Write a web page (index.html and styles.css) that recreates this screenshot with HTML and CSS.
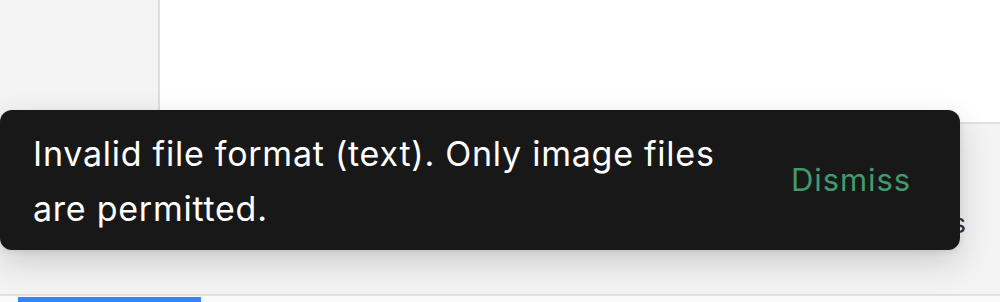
FILE: index.html
```html
<!DOCTYPE html>
<html lang="en">
<head>
<meta charset="utf-8">
<title>Toast</title>
<link rel="stylesheet" href="styles.css">
</head>
<body>
<div class="app">
  <div class="top">
    <aside class="sidebar"></aside>
    <main class="main"></main>
  </div>
  <section class="panel">
    <div class="panel-row"><span class="panel-label">Details</span></div>
  </section>
  <nav class="tabs">
    <div class="tab-indicator"></div>
  </nav>
  <div class="toast" role="alert">
    <p class="toast-message">Invalid file format (text). Only image files are permitted.</p>
    <button class="toast-action" type="button">Dismiss</button>
  </div>
</div>
</body>
</html>
```

FILE: styles.css
```css
* { box-sizing: border-box; }
html, body {
  margin: 0;
  padding: 0;
  width: 1000px;
  height: 302px;
  overflow: hidden;
  font-family: Inter, "Noto Sans", "Liberation Sans", sans-serif;
}
.app {
  position: relative;
  width: 1000px;
  height: 302px;
  display: flex;
  flex-direction: column;
  background: #fafafa;
}
.top {
  display: flex;
  height: 122px;
}
.sidebar {
  width: 160px;
  background: #f3f3f3;
  border-right: 2px solid #dedede;
}
.main {
  flex: 1;
  background: #ffffff;
}
.panel {
  height: 175px;
  background: #f3f3f3;
  border-top: 2px solid #e2e2e2;
  border-bottom: 2px solid #e2e2e2;
  display: flex;
  flex-direction: column;
  justify-content: center;
}
.panel-row {
  display: flex;
  justify-content: flex-end;
  padding-right: 34px;
  padding-top: 30px;
}
.panel-label {
  font-size: 27px;
  line-height: 40px;
  color: #333333;
}
.tabs {
  flex: 1;
  padding-left: 18px;
  padding-top: 1px;
  background: #fafafa;
}
.tab-indicator {
  width: 183px;
  height: 5px;
  background: #3b82f6;
}
.toast {
  position: absolute;
  left: 0;
  top: 110px;
  width: 960px;
  height: 140px;
  background: #181818;
  border-radius: 12px;
  box-shadow: 0 12px 32px rgba(0, 0, 0, 0.16), 0 2px 6px rgba(0, 0, 0, 0.08);
  display: flex;
  align-items: center;
  gap: 40px;
  padding: 2px 49px 0 33px;
}
.toast-message {
  flex: 1;
  margin: 0;
  color: #ffffff;
  font-size: 34px;
  line-height: 55px;
  letter-spacing: 0.75px;
}
.toast-action {
  border: 0;
  background: transparent;
  padding: 0 0 2px;
  font-family: inherit;
  font-size: 31px;
  line-height: 54px;
  color: #429a6c;
  letter-spacing: 0.9px;
  cursor: pointer;
}
```
